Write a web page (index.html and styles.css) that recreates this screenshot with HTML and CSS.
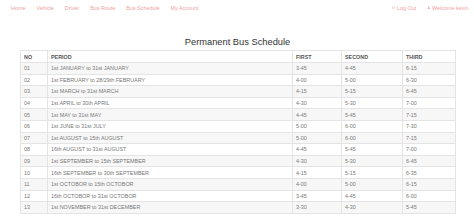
FILE: index.html
```html
<!DOCTYPE html>
<html>
<head>
<meta charset="utf-8">
<link rel="stylesheet" href="styles.css">
</head>
<body>
<nav class="navbar">
  <ul class="nav-left">
    <li><a>Home</a></li>
    <li><a>Vehicle</a></li>
    <li><a>Driver</a></li>
    <li><a>Bus Route</a></li>
    <li><a>Bus Schedule</a></li>
    <li><a>My Account</a></li>
  </ul>
  <ul class="nav-right">
    <li><a><svg class="ico" viewBox="0 0 10 10"><path d="M4 1H1v8h3M4 5h5M7 3l2 2-2 2" fill="none" stroke="currentColor" stroke-width="1.2"/></svg>Log Out</a></li>
    <li><a><svg class="ico" viewBox="0 0 10 10"><circle cx="5" cy="3" r="2.2" fill="currentColor"/><path d="M1 10c0-3 2-4.5 4-4.5S9 7 9 10z" fill="currentColor"/></svg>Welcome kevin</a></li>
  </ul>
</nav>
<main class="content">
  <h2 class="title">Permanent Bus Schedule</h2>
  <table class="sched">
    <colgroup>
      <col class="c-no"><col class="c-period"><col class="c-first"><col class="c-second"><col class="c-third">
    </colgroup>
    <thead>
      <tr><th>NO</th><th>PERIOD</th><th>FIRST</th><th>SECOND</th><th>THIRD</th></tr>
    </thead>
    <tbody>
      <tr><td>01</td><td>1st JANUARY to 31st JANUARY</td><td>3-45</td><td>4-45</td><td>6-15</td></tr>
      <tr><td>02</td><td>1st FEBRUARY to 28/29th FEBRUARY</td><td>4-00</td><td>5-00</td><td>6-30</td></tr>
      <tr><td>03</td><td>1st MARCH to 31st MARCH</td><td>4-15</td><td>5-15</td><td>6-45</td></tr>
      <tr><td>04</td><td>1st APRIL to 30th APRIL</td><td>4-30</td><td>5-30</td><td>7-00</td></tr>
      <tr><td>05</td><td>1st MAY to 31st MAY</td><td>4-45</td><td>5-45</td><td>7-15</td></tr>
      <tr><td>06</td><td>1st JUNE to 31st JULY</td><td>5-00</td><td>6-00</td><td>7-30</td></tr>
      <tr><td>07</td><td>1st AUGUST to 15th AUGUST</td><td>5-00</td><td>6-00</td><td>7-15</td></tr>
      <tr><td>08</td><td>16th AUGUST to 31st AUGUST</td><td>4-45</td><td>5-45</td><td>7-00</td></tr>
      <tr><td>09</td><td>1st SEPTEMBER to 15th SEPTEMBER</td><td>4-30</td><td>5-30</td><td>6-45</td></tr>
      <tr><td>10</td><td>16th SEPTEMBER to 30th SEPTEMBER</td><td>4-15</td><td>5-15</td><td>6-35</td></tr>
      <tr><td>11</td><td>1st OCTOBOR to 15th OCTOBOR</td><td>4-00</td><td>5-00</td><td>6-15</td></tr>
      <tr><td>12</td><td>16th OCTOBOR to 31st OCTOBOR</td><td>3-45</td><td>4-45</td><td>6-00</td></tr>
      <tr><td>13</td><td>1st NOVEMBER to 31st DECEMBER</td><td>3-30</td><td>4-30</td><td>5-45</td></tr>
    </tbody>
  </table>
</main>
</body>
</html>
```
FILE: styles.css
```css
html, body {
  margin: 0;
  padding: 0;
  background: #fff;
  font-family: "Liberation Sans", Arial, sans-serif;
  color: #333;
}
.navbar {
  display: flex;
  justify-content: space-between;
  height: 15px;
  align-items: center;
  padding: 0 0 0 5.5px;
  font-size: 5.4px;
}
.navbar ul {
  list-style: none;
  margin: 0;
  padding: 0;
  display: flex;
}
.navbar a {
  display: flex;
  align-items: center;
  padding: 0 5.5px;
  color: #f0a3a3;
}
.ico {
  width: 3.6px;
  height: 3.6px;
  margin-right: 1.2px;
}
.content {
  padding: 0 19px 0 20px;
}
.title {
  margin: 22px 0 2px;
  text-align: center;
  font-weight: normal;
  font-size: 9.3px;
  line-height: 11px;
  color: #333;
}
.sched {
  width: 435px;
  border-collapse: collapse;
  table-layout: fixed;
  font-size: 5.4px;
}
.c-no { width: 27px; }
.c-period { width: 245px; }
.c-first { width: 49px; }
.c-second { width: 61px; }
.c-third { width: 53px; }
.sched th, .sched td {
  border: 1px solid #e4e4e4;
  padding: 0 3px;
  text-align: left;
  white-space: nowrap;
}
.sched th {
  height: 11px;
  font-weight: bold;
  color: #555;
}
.sched td {
  height: 10.6px;
  color: #777;
}
.sched tbody tr:nth-child(odd) {
  background: #f7f7f7;
}
```
